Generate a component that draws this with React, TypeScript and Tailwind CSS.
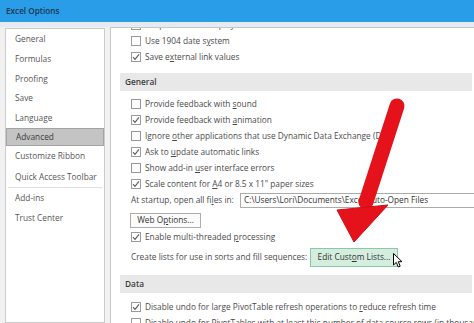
const navItems = [
    { label: "General", h: "h-[20px]" },
    { label: "Formulas", h: "h-[20px]" },
    { label: "Proofing", h: "h-[20px]" },
    { label: "Save", h: "h-[19px]" },
    { label: "Language", h: "h-[20px]" },
    { label: "Advanced", h: "h-[18px]", active: true },
    { label: "Customize Ribbon", h: "h-[21px]" },
    { label: "Quick Access Toolbar", h: "h-[20px]" },
];

const navBottom = ["Add-ins", "Trust Center"];

const Check = ({ checked }: { checked?: boolean }) => (
    <span className="w-[10px] h-[10px] border border-[#9a9a9a] bg-white flex items-center justify-center shrink-0">
        {checked && (
            <svg width="8" height="8" viewBox="0 0 8 8">
                <path d="M1 4.2 L3 6.3 L7 1.3" fill="none" stroke="#5a5a5a" strokeWidth="1.1" />
            </svg>
        )}
    </span>
);

const Row = ({ checked, children }: { checked?: boolean; children: React.ReactNode }) => (
    <div className="h-[16px] flex items-center pl-[20px] gap-[4px] whitespace-nowrap">
        <Check checked={checked} />
        <span>{children}</span>
    </div>
);

const Header = ({ label, mt }: { label: string; mt: string }) => (
    <div className={`${mt} ml-[9px] mr-[2px] h-[18px] bg-[#e8e8e8] flex items-center pl-[5px] font-semibold text-[#3c3c3c]`}>
        {label}
    </div>
);

export default function App() {
    return (
        <div className="relative w-[474px] h-[323px] overflow-hidden bg-[#f1f1f1] text-[8.3px] text-[#4a4a4a] font-['Open_Sans',sans-serif]">
            <div className="h-[22px] bg-[#2a9de8] flex items-center pl-[6px] text-[8.2px] font-semibold text-[#1b3552]">
                Excel Options
            </div>
            <div className="h-[5px] bg-[#e4ecf1]" />

            <div className="flex h-[296px]">
                {/* left nav */}
                <div className="ml-[5px] mt-[1px] w-[100px] bg-white border border-[#cbcbcb] text-[#555]">
                    {navItems.map((item) => (
                        <div
                            key={item.label}
                            className={`${item.h} flex items-center pl-[9px] ${item.active ? "bg-[#c4c4c4] border border-[#a3a3a3] pl-[8px] text-[#3a3a3a]" : ""}`}
                        >
                            {item.label}
                        </div>
                    ))}
                    <div className="mx-[2px] border-t border-[#e0e0e0]" />
                    {navBottom.map((label) => (
                        <div key={label} className="h-[20px] flex items-center pl-[9px]">
                            {label}
                        </div>
                    ))}
                </div>

                {/* right panel */}
                <div className="ml-[5px] flex-1 bg-white border-l border-t border-[#c6c6c6] overflow-hidden">
                    <div className="-mt-[11px]">
                        <Row>Set precision as displayed</Row>
                        <Row>Use 1904 date s<u>y</u>stem</Row>
                        <Row checked>Save e<u>x</u>ternal link values</Row>

                        <Header label="General" mt="mt-[8px]" />

                        <div className="mt-[5px]">
                            <Row>Provide feedback with <u>s</u>ound</Row>
                            <Row checked>Provide feedback with <u>a</u>nimation</Row>
                            <Row>Ignore <u>o</u>ther applications that use Dynamic Data Exchange (DDE)</Row>
                            <Row checked>Ask to <u>u</u>pdate automatic links</Row>
                            <Row>Show add-in <u>u</u>ser interface errors</Row>
                            <Row checked>Scale content for <u>A</u>4 or 8.5 x 11" paper sizes</Row>
                        </div>

                        <div className="h-[16px] flex items-center pl-[20px] whitespace-nowrap">
                            <span className="w-[109px] shrink-0">At startup, open all fi<u>l</u>es in:</span>
                            <div className="h-[15px] w-[260px] shrink-0 border border-[#ababab] flex items-center pl-[3px] text-[#333]">
                                C:\Users\Lori\Documents\Excel Auto-Open Files
                            </div>
                        </div>

                        <div className="mt-[5px] ml-[19px] w-[71px] h-[15px] border border-[#adadad] bg-[#fbfbfb] flex items-center justify-center text-[#333]">
                            Web O<u>p</u>tions...
                        </div>

                        <div className="mt-[1px]">
                            <Row checked>Enable multi-threaded <u>p</u>rocessing</Row>
                        </div>

                        <div className="mt-[2px] h-[20px] flex items-center pl-[20px] whitespace-nowrap">
                            <span className="w-[179px] shrink-0">Create lists for use in sorts and fill sequences:</span>
                            <div className="h-[19px] w-[88px] shrink-0 border border-[#8cc8a6] bg-[#d3eddf] flex items-center justify-center text-[#333]">
                                Edit Cust<u>o</u>m Lists...
                            </div>
                        </div>

                        <Header label="Data" mt="mt-[8px]" />

                        <div className="mt-[6px]">
                            <Row checked>Disable undo for large PivotTable refresh operations to <u>r</u>educe refresh time</Row>
                            <Row>Disable undo for PivotTables with at least this number of data source rows (in thousands):</Row>
                        </div>
                    </div>
                </div>
            </div>

            {/* red annotation arrow */}
            <svg className="absolute left-0 top-0 pointer-events-none" width="474" height="323" viewBox="0 0 474 323">
                <line x1="397" y1="106" x2="366" y2="202" stroke="#e5121b" strokeWidth="15" strokeLinecap="round" />
                <polygon points="337,210 388,205 354,242" fill="#e5121b" stroke="#d10d16" strokeWidth="1" strokeLinejoin="round" />
            </svg>

            {/* mouse cursor */}
            <svg className="absolute left-[393px] top-[253px] pointer-events-none" width="11" height="16" viewBox="0 0 11 16">
                <path d="M0.5 0.5 L0.5 12 L3.3 9.4 L5.3 14 L7.2 13.2 L5.3 8.7 L9 8.7 Z" fill="white" stroke="black" strokeWidth="1" strokeLinejoin="round" />
            </svg>
        </div>
    );
}
